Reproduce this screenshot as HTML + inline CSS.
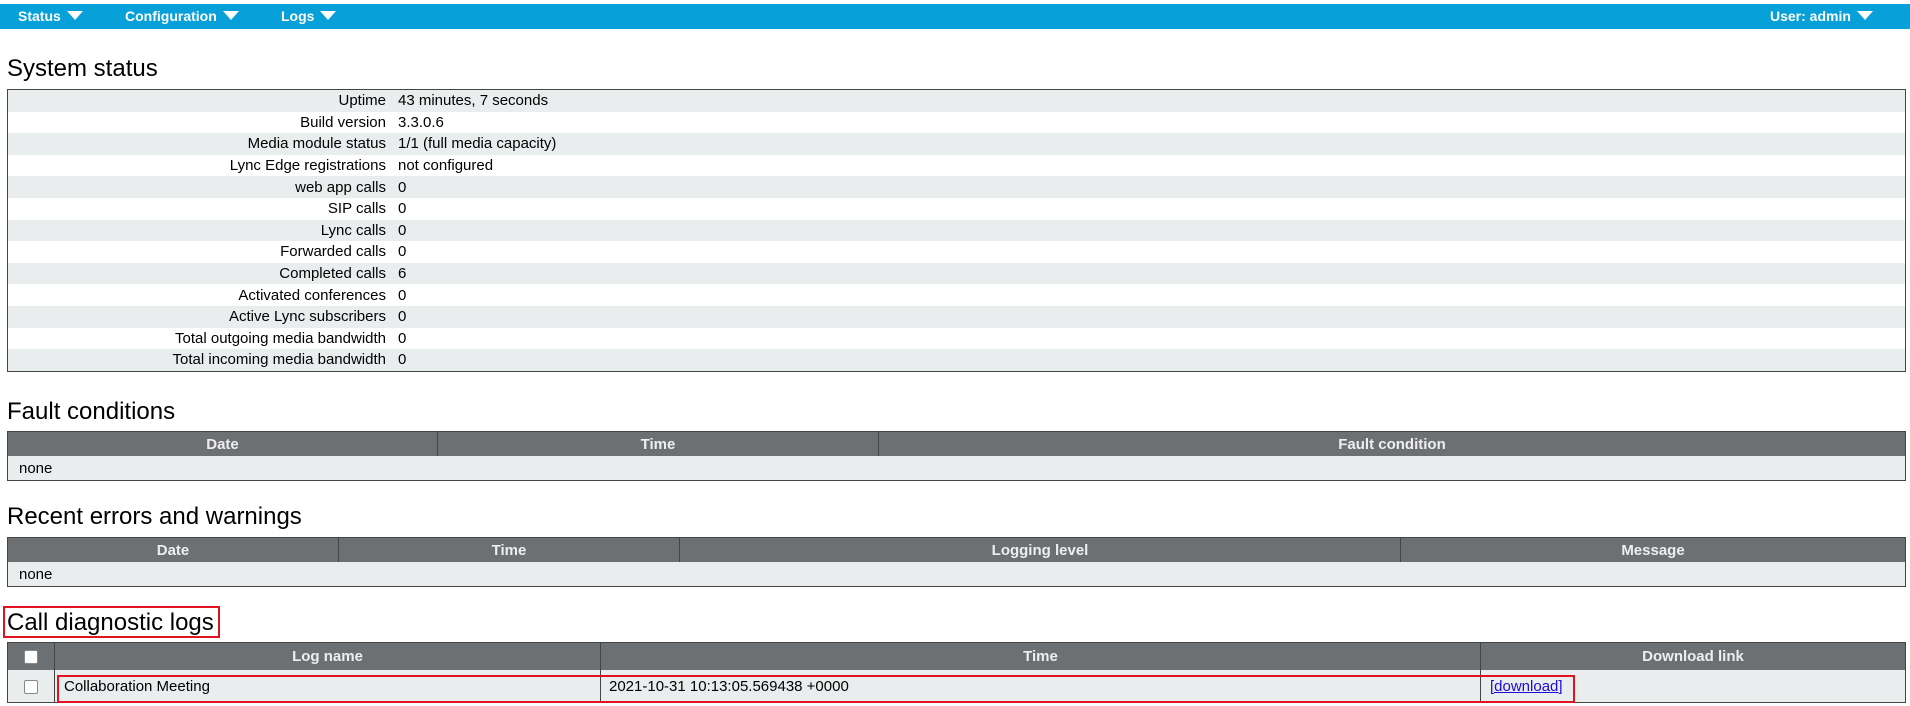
<!DOCTYPE html>
<html><head><meta charset="utf-8"><style>
body{margin:0;background:#fff;font-family:"Liberation Sans",sans-serif;color:#000;width:1910px;height:706px;overflow:hidden;position:relative}
.nav{position:absolute;left:0;top:4px;width:1910px;height:25px;background:#07a0d8;color:#fff;font-weight:bold;font-size:14px}
.nav span{position:absolute;top:4px}
.tri{display:inline-block;width:0;height:0;border-left:8px solid transparent;border-right:8px solid transparent;border-top:9px solid #fff;margin-left:6px;vertical-align:1px}
h2{position:absolute;margin:0;font-weight:normal;font-size:24px;left:7px}
table{position:absolute;left:7px;width:1899px;border-collapse:collapse;border:1.5px solid #444;font-size:15px}
td,th{padding:0;height:21.6px}
.sys tr:nth-child(odd){background:#e9edee}
.sys td.l{width:378px;text-align:right;padding-right:12px}
th{background:#6d7073;color:#eee;font-weight:bold;border-left:1px solid #444;height:24px;font-size:15px}
.g{background:#e9edee}
.cb{display:inline-block;width:12px;height:12px;background:#fff;border:1px solid #888;border-radius:2px;vertical-align:middle}
.red{position:absolute;border:2.5px solid #e0141e}
</style></head><body>
<div class="nav"><span style="left:18px">Status<i class="tri"></i></span><span style="left:125px">Configuration<i class="tri"></i></span><span style="left:281px">Logs<i class="tri"></i></span><span style="left:1770px">User: admin<i class="tri"></i></span></div>
<h2 style="top:55px">System status</h2>
<table class="sys" style="top:89px">
<tr><td class="l">Uptime</td><td>43 minutes, 7 seconds</td></tr>
<tr><td class="l">Build version</td><td>3.3.0.6</td></tr>
<tr><td class="l">Media module status</td><td>1/1 (full media capacity)</td></tr>
<tr><td class="l">Lync Edge registrations</td><td>not configured</td></tr>
<tr><td class="l">web app calls</td><td>0</td></tr>
<tr><td class="l">SIP calls</td><td>0</td></tr>
<tr><td class="l">Lync calls</td><td>0</td></tr>
<tr><td class="l">Forwarded calls</td><td>0</td></tr>
<tr><td class="l">Completed calls</td><td>6</td></tr>
<tr><td class="l">Activated conferences</td><td>0</td></tr>
<tr><td class="l">Active Lync subscribers</td><td>0</td></tr>
<tr><td class="l">Total outgoing media bandwidth</td><td>0</td></tr>
<tr><td class="l">Total incoming media bandwidth</td><td>0</td></tr>
</table>
<h2 style="top:398px">Fault conditions</h2>
<table style="top:431px">
<tr><th style="width:429px">Date</th><th style="width:440px">Time</th><th>Fault condition</th></tr>
<tr class="g"><td colspan="3" style="padding-left:11px;height:24px">none</td></tr>
</table>
<h2 style="top:503px">Recent errors and warnings</h2>
<table style="top:537px">
<tr><th style="width:330px">Date</th><th style="width:340px">Time</th><th style="width:720px">Logging level</th><th>Message</th></tr>
<tr class="g"><td colspan="4" style="padding-left:11px;height:24px">none</td></tr>
</table>
<h2 style="top:609px">Call diagnostic logs</h2>
<div class="red" style="left:3px;top:606px;width:213px;height:28px"></div>
<table style="top:642px">
<tr><th style="width:46px;height:27px"><span class="cb"></span></th><th style="width:545px">Log name</th><th style="width:879px">Time</th><th>Download link</th></tr>
<tr class="g"><td style="text-align:center;height:32px;border-right:1px solid #444"><span class="cb"></span></td><td style="padding-left:9px;border-right:1px solid #444">Collaboration Meeting</td><td style="padding-left:8px;border-right:1px solid #444">2021-10-31 10:13:05.569438 +0000</td><td style="padding-left:9px"><a style="color:#1a0dd8;text-decoration:underline">[download]</a></td></tr>
</table>
<div class="red" style="left:57px;top:675px;width:1514px;height:24px"></div>
</body></html>
